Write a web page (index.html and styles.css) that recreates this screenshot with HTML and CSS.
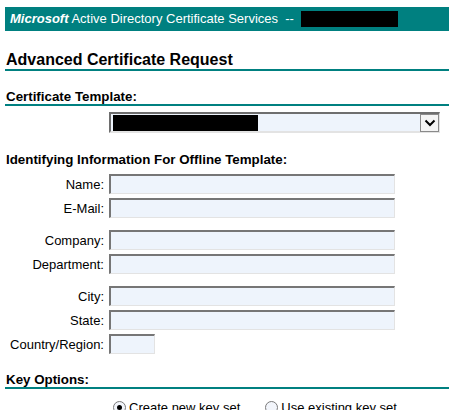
FILE: index.html
```html
<!DOCTYPE html>
<html>
<head>
<meta charset="utf-8">
<link rel="stylesheet" href="styles.css">
</head>
<body>
<div class="banner"><span class="brand">Microsoft</span> Active Directory Certificate Services&nbsp;&nbsp;--&nbsp; <span class="redact banner-redact"></span></div>

<h1 class="title">Advanced Certificate Request</h1>

<h2 class="section ruled">Certificate Template:</h2>
<div class="select-row">
  <div class="select">
    <span class="redact select-redact"></span>
    <span class="drop">
      <svg width="12" height="8" viewBox="0 0 12 8"><path d="M1.5 1.5 L6 6 L10.5 1.5" fill="none" stroke="#000" stroke-width="2"/></svg>
    </span>
  </div>
</div>

<h2 class="section plain">Identifying Information For Offline Template:</h2>
<div class="form">
  <div class="group">
    <div class="row"><label class="lbl">Name:</label><span class="field"></span></div>
    <div class="row"><label class="lbl">E-Mail:</label><span class="field"></span></div>
  </div>
  <div class="group">
    <div class="row"><label class="lbl">Company:</label><span class="field"></span></div>
    <div class="row"><label class="lbl">Department:</label><span class="field"></span></div>
  </div>
  <div class="group">
    <div class="row"><label class="lbl">City:</label><span class="field"></span></div>
    <div class="row"><label class="lbl">State:</label><span class="field"></span></div>
    <div class="row"><label class="lbl">Country/Region:</label><span class="field short"></span></div>
  </div>
</div>

<h2 class="section ruled keyopts">Key Options:</h2>
<div class="radios">
  <span class="radio-item"><span class="radio checked"></span>Create new key set</span>
  <span class="radio-item"><span class="radio"></span>Use existing key set</span>
</div>
</body>
</html>
```

FILE: styles.css
```css
html, body {
  background: #fff;
}
body {
  margin: 7px 0 0 5px;
  font-family: "Liberation Sans", Arial, sans-serif;
  font-size: 13px;
  color: #000;
  overflow: hidden;
}
.banner {
  background: #008080;
  color: #fff;
  height: 24px;
  line-height: 24px;
  padding-left: 5px;
  white-space: nowrap;
}
.brand {
  font-weight: bold;
  font-style: italic;
}
.redact {
  display: inline-block;
  background: #000;
}
.banner-redact {
  width: 97px;
  height: 16px;
  vertical-align: -4px;
}
.title {
  margin: 20px 0 0 0;
  font-size: 16px;
  line-height: 18px;
  font-weight: bold;
  border-bottom: 2px solid #008080;
  padding-left: 1px;
}
.section {
  margin: 0;
  font-size: 13.33px;
  line-height: 14px;
  font-weight: bold;
  padding-left: 1px;
}
.section.ruled {
  border-bottom: 2px solid #008080;
  margin-top: 19px;
}
.section.plain {
  margin-top: 20px;
}
.select-row {
  padding-left: 104px;
  margin-top: 6px;
}
.select {
  width: 331px;
  height: 21px;
  box-sizing: border-box;
  background: #eef4fc;
  border-top: 2px solid #6e6e6e;
  border-left: 2px solid #6e6e6e;
  border-bottom: 2px solid #e3e3e3;
  border-right: 1px solid #e3e3e3;
  display: flex;
  align-items: center;
  padding-left: 2px;
}
.select-redact {
  width: 145px;
  height: 16px;
  margin-top: 1px;
}
.drop {
  margin-left: auto;
  width: 19px;
  height: 18px;
  box-sizing: border-box;
  border: 1px solid #8a8a8a;
  background: #f4f4f4;
  display: flex;
  align-items: center;
  justify-content: center;
}
.form {
  margin-top: 7px;
  display: flex;
  flex-direction: column;
  gap: 12px;
}
.group {
  display: flex;
  flex-direction: column;
  gap: 4px;
}
.row {
  display: grid;
  grid-template-columns: 99px auto;
  column-gap: 5px;
  align-items: start;
}
.lbl {
  text-align: right;
  line-height: 16px;
  padding-top: 3px;
  white-space: nowrap;
}
.field {
  display: block;
  width: 286px;
  height: 20px;
  box-sizing: border-box;
  background: #eef4fc;
  border-top: 2px solid #767676;
  border-left: 2px solid #767676;
  border-bottom: 1px solid #e3e3e3;
  border-right: 1px solid #e3e3e3;
}
.field.short {
  width: 46px;
}
.keyopts {
  margin-top: 20px;
}
.radios {
  margin-top: 11px;
  padding-left: 108px;
  display: flex;
  line-height: 16px;
  white-space: nowrap;
}
.radio-item {
  display: inline-flex;
  align-items: flex-start;
}
.radio-item + .radio-item {
  margin-left: 25px;
}
.radio {
  width: 13px;
  height: 13px;
  box-sizing: border-box;
  border: 1px solid #7a7a7a;
  border-radius: 50%;
  background: #f2f5fb;
  margin-right: 3px;
  margin-top: 1px;
  display: flex;
  align-items: center;
  justify-content: center;
}
.radio.checked::after {
  content: "";
  width: 5px;
  height: 5px;
  border-radius: 50%;
  background: #000;
}
```
